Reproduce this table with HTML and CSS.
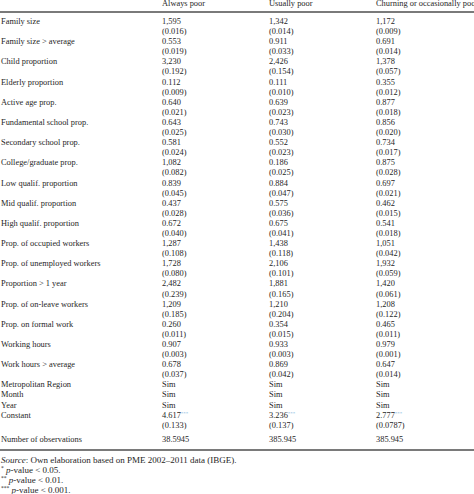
FILE: index.html
```html
<!DOCTYPE html>
<html>
<head>
<meta charset="utf-8">
<link rel="stylesheet" href="styles.css">
</head>
<body>
<table class="reg">
<thead>
<tr><th></th><th>Always poor</th><th>Usually poor</th><th>Churning or occasionally poor</th></tr>
</thead>
<tbody>
<tr><td>Family size</td><td>1,595</td><td>1,342</td><td>1,172</td></tr>
<tr class="se"><td></td><td>(0.016)</td><td>(0.014)</td><td>(0.009)</td></tr>
<tr><td>Family size &gt; average</td><td>0.553</td><td>0.911</td><td>0.691</td></tr>
<tr class="se"><td></td><td>(0.019)</td><td>(0.033)</td><td>(0.014)</td></tr>
<tr><td>Child proportion</td><td>3,230</td><td>2,426</td><td>1,378</td></tr>
<tr class="se"><td></td><td>(0.192)</td><td>(0.154)</td><td>(0.057)</td></tr>
<tr><td>Elderly proportion</td><td>0.112</td><td>0.111</td><td>0.355</td></tr>
<tr class="se"><td></td><td>(0.009)</td><td>(0.010)</td><td>(0.012)</td></tr>
<tr><td>Active age prop.</td><td>0.640</td><td>0.639</td><td>0.877</td></tr>
<tr class="se"><td></td><td>(0.021)</td><td>(0.023)</td><td>(0.018)</td></tr>
<tr><td>Fundamental school prop.</td><td>0.643</td><td>0.743</td><td>0.856</td></tr>
<tr class="se"><td></td><td>(0.025)</td><td>(0.030)</td><td>(0.020)</td></tr>
<tr><td>Secondary school prop.</td><td>0.581</td><td>0.552</td><td>0.734</td></tr>
<tr class="se"><td></td><td>(0.024)</td><td>(0.023)</td><td>(0.017)</td></tr>
<tr><td>College/graduate prop.</td><td>1,082</td><td>0.186</td><td>0.875</td></tr>
<tr class="se"><td></td><td>(0.082)</td><td>(0.025)</td><td>(0.028)</td></tr>
<tr><td>Low qualif. proportion</td><td>0.839</td><td>0.884</td><td>0.697</td></tr>
<tr class="se"><td></td><td>(0.045)</td><td>(0.047)</td><td>(0.021)</td></tr>
<tr><td>Mid qualif. proportion</td><td>0.437</td><td>0.575</td><td>0.462</td></tr>
<tr class="se"><td></td><td>(0.028)</td><td>(0.036)</td><td>(0.015)</td></tr>
<tr><td>High qualif. proportion</td><td>0.672</td><td>0.675</td><td>0.541</td></tr>
<tr class="se"><td></td><td>(0.040)</td><td>(0.041)</td><td>(0.018)</td></tr>
<tr><td>Prop. of occupied workers</td><td>1,287</td><td>1,438</td><td>1,051</td></tr>
<tr class="se"><td></td><td>(0.108)</td><td>(0.118)</td><td>(0.042)</td></tr>
<tr><td>Prop. of unemployed workers</td><td>1,728</td><td>2,106</td><td>1,932</td></tr>
<tr class="se"><td></td><td>(0.080)</td><td>(0.101)</td><td>(0.059)</td></tr>
<tr><td>Proportion &gt; 1 year</td><td>2,482</td><td>1,881</td><td>1,420</td></tr>
<tr class="se"><td></td><td>(0.239)</td><td>(0.165)</td><td>(0.061)</td></tr>
<tr><td>Prop. of on-leave workers</td><td>1,209</td><td>1,210</td><td>1,208</td></tr>
<tr class="se"><td></td><td>(0.185)</td><td>(0.204)</td><td>(0.122)</td></tr>
<tr><td>Prop. on formal work</td><td>0.260</td><td>0.354</td><td>0.465</td></tr>
<tr class="se"><td></td><td>(0.011)</td><td>(0.015)</td><td>(0.011)</td></tr>
<tr><td>Working hours</td><td>0.907</td><td>0.933</td><td>0.979</td></tr>
<tr class="se"><td></td><td>(0.003)</td><td>(0.003)</td><td>(0.001)</td></tr>
<tr><td>Work hours &gt; average</td><td>0.678</td><td>0.869</td><td>0.647</td></tr>
<tr class="se"><td></td><td>(0.037)</td><td>(0.042)</td><td>(0.014)</td></tr>
<tr class="tight"><td>Metropolitan Region</td><td>Sim</td><td>Sim</td><td>Sim</td></tr>
<tr class="tight"><td>Month</td><td>Sim</td><td>Sim</td><td>Sim</td></tr>
<tr class="tight"><td>Year</td><td>Sim</td><td>Sim</td><td>Sim</td></tr>
<tr class="tight"><td>Constant</td><td>4.617<sup class="star">***</sup></td><td>3.236<sup class="star">***</sup></td><td>2.777<sup class="star">***</sup></td></tr>
<tr class="se"><td></td><td>(0.133)</td><td>(0.137)</td><td>(0.0787)</td></tr>
<tr class="obs"><td>Number of observations</td><td>38.5945</td><td>385.945</td><td>385.945</td></tr>
</tbody>
</table>
<div class="notes">
<p><i>Source</i>: Own elaboration based on PME 2002–2011 data (IBGE).</p>
<p><sup>*</sup> <i>p</i>-value &lt; 0.05.</p>
<p><sup>**</sup> <i>p</i>-value &lt; 0.01.</p>
<p><sup>***</sup> <i>p</i>-value &lt; 0.001.</p>
</div>
</body>
</html>
```
FILE: styles.css
```css
html, body {
  margin: 0;
  padding: 0;
  background: #fff;
}
body {
  font-family: "Liberation Serif", "Times New Roman", serif;
  color: #262626;
  width: 474px;
  overflow: hidden;
}
.reg {
  border-collapse: collapse;
  table-layout: fixed;
  width: 490px;
  font-size: 8.4px;
  line-height: 10.1px;
  border-bottom: 2px solid #7a7a7a;
}
.reg th, .reg td {
  padding: 0;
  text-align: left;
  font-weight: normal;
  white-space: nowrap;
  vertical-align: top;
}
.reg th:nth-child(1), .reg td:nth-child(1) { width: 161px; padding-left: 1px; }
.reg th:nth-child(2), .reg td:nth-child(2) { width: 107px; }
.reg th:nth-child(3), .reg td:nth-child(3) { width: 107px; }
.reg thead th {
  padding-top: 0;
  padding-bottom: 3px;
  border-bottom: 2px solid #7a7a7a;
  line-height: 8px;
}
.reg tbody tr:first-child td { padding-top: 4px; }
.reg tr.obs td { padding-top: 4px; padding-bottom: 4px; }
.star {
  color: #7fb6e0;
  font-size: 5px;
  line-height: 0;
  vertical-align: 3px;
}
.notes {
  padding: 4px 0 0 1px;
  font-size: 9px;
  line-height: 10px;
}
.notes p { margin: 0; }
.notes sup {
  font-size: 5.5px;
  line-height: 0;
  vertical-align: 3px;
}
```
